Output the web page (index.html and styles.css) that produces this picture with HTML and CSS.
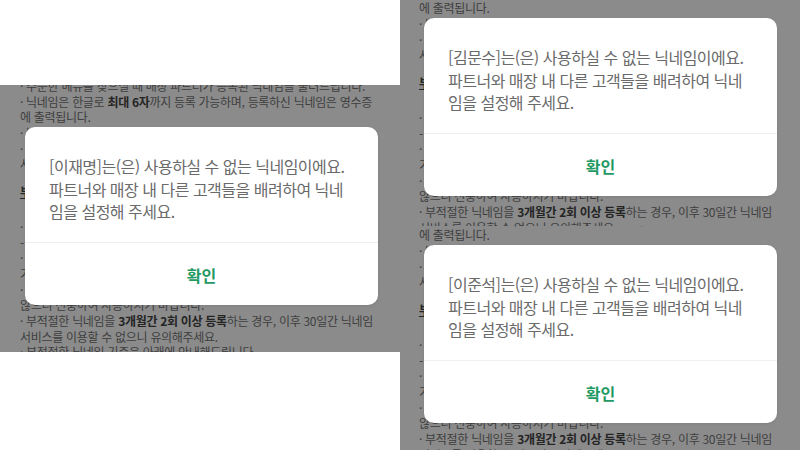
FILE: index.html
```html
<!DOCTYPE html>
<html lang="ko">
<head>
<meta charset="utf-8">
<title>닉네임 안내</title>
<link rel="stylesheet" href="styles.css">
</head>
<body>
<div class="page">
  <div class="col col-left">
    <div class="blank-top"></div>
    <div class="viewport vp-left">
      <div class="screen shift-left">
        <div class="sheet">
          <p class="ln">· 주문한 메뉴를 찾으실 때 매장 파트너가 등록된 닉네임을 불러드립니다.</p>
          <p class="ln">· 닉네임은 한글로 <b>최대 6자</b>까지 등록 가능하며, 등록하신 닉네임은 영수증</p>
          <p class="ln">에 출력됩니다.</p>
          <p class="ln">· 닉네임 사용에 동의하지 않으시면 닉네임이 호출되지 않습니다.</p>
          <p class="ln">· 등록하신 닉네임은 언제든지 변경하실 수 있습니다.</p>
          <p class="ln">사용 가능한 닉네임인지 확인 후 등록해 주세요.</p>
          <p class="ln head"><b><u>부</u>적절한 닉네임 등록 제한</b></p>
          <p class="ln gap">· 욕설, 비속어, 타인을 비방하는 닉네임은 등록이 제한됩니다.</p>
          <p class="ln">- 정치적, 종교적 의미가 담긴 닉네임</p>
          <p class="ln">· 다른 고객에게 불쾌감을 줄 수 있는 닉네임은 제한됩니다.</p>
          <p class="ln">가급적 개인정보가 포함되지 않은 닉네임을 사용해 주세요.</p>
          <p class="ln">· 부적절한 닉네임은 사전 안내 없이 변경될 수 있으며, 복구되지</p>
          <p class="ln">않으니 신중하여 사용하시기 바랍니다.</p>
          <p class="ln">· 부적절한 닉네임을 <b>3개월간 2회 이상 등록</b>하는 경우, 이후 30일간 닉네임</p>
          <p class="ln">서비스를 이용할 수 없으니 유의해주세요.</p>
          <p class="ln">· 부적절한 닉네임 기준은 아래에 안내해드립니다.</p>
        </div>
        <div class="dialog">
          <p class="msg">[이재명]는(은) 사용하실 수 없는 닉네임이에요. 파트너와 매장 내 다른 고객들을 배려하여 닉네임을 설정해 주세요.</p>
          <div class="btn">확인</div>
        </div>
      </div>
    </div>
  </div>
  <div class="col col-right">
    <div class="viewport vp-rt">
      <div class="screen shift-rt">
        <div class="sheet">
          <p class="ln">· 주문한 메뉴를 찾으실 때 매장 파트너가 등록된 닉네임을 불러드립니다.</p>
          <p class="ln">· 닉네임은 한글로 <b>최대 6자</b>까지 등록 가능하며, 등록하신 닉네임은 영수증</p>
          <p class="ln">에 출력됩니다.</p>
          <p class="ln">· 닉네임 사용에 동의하지 않으시면 닉네임이 호출되지 않습니다.</p>
          <p class="ln">· 등록하신 닉네임은 언제든지 변경하실 수 있습니다.</p>
          <p class="ln">사용 가능한 닉네임인지 확인 후 등록해 주세요.</p>
          <p class="ln head"><b><u>부</u>적절한 닉네임 등록 제한</b></p>
          <p class="ln gap">· 욕설, 비속어, 타인을 비방하는 닉네임은 등록이 제한됩니다.</p>
          <p class="ln">- 정치적, 종교적 의미가 담긴 닉네임</p>
          <p class="ln">· 다른 고객에게 불쾌감을 줄 수 있는 닉네임은 제한됩니다.</p>
          <p class="ln">가급적 개인정보가 포함되지 않은 닉네임을 사용해 주세요.</p>
          <p class="ln">· 부적절한 닉네임은 사전 안내 없이 변경될 수 있으며, 복구되지</p>
          <p class="ln">않으니 신중하여 사용하시기 바랍니다.</p>
          <p class="ln">· 부적절한 닉네임을 <b>3개월간 2회 이상 등록</b>하는 경우, 이후 30일간 닉네임</p>
          <p class="ln">서비스를 이용할 수 없으니 유의해주세요.</p>
          <p class="ln">· 부적절한 닉네임 기준은 아래에 안내해드립니다.</p>
        </div>
        <div class="dialog">
          <p class="msg">[김문수]는(은) 사용하실 수 없는 닉네임이에요. 파트너와 매장 내 다른 고객들을 배려하여 닉네임을 설정해 주세요.</p>
          <div class="btn">확인</div>
        </div>
      </div>
    </div>
    <div class="viewport vp-rb">
      <div class="screen shift-rb">
        <div class="sheet">
          <p class="ln">· 주문한 메뉴를 찾으실 때 매장 파트너가 등록된 닉네임을 불러드립니다.</p>
          <p class="ln">· 닉네임은 한글로 <b>최대 6자</b>까지 등록 가능하며, 등록하신 닉네임은 영수증</p>
          <p class="ln">에 출력됩니다.</p>
          <p class="ln">· 닉네임 사용에 동의하지 않으시면 닉네임이 호출되지 않습니다.</p>
          <p class="ln">· 등록하신 닉네임은 언제든지 변경하실 수 있습니다.</p>
          <p class="ln">사용 가능한 닉네임인지 확인 후 등록해 주세요.</p>
          <p class="ln head"><b><u>부</u>적절한 닉네임 등록 제한</b></p>
          <p class="ln gap">· 욕설, 비속어, 타인을 비방하는 닉네임은 등록이 제한됩니다.</p>
          <p class="ln">- 정치적, 종교적 의미가 담긴 닉네임</p>
          <p class="ln">· 다른 고객에게 불쾌감을 줄 수 있는 닉네임은 제한됩니다.</p>
          <p class="ln">가급적 개인정보가 포함되지 않은 닉네임을 사용해 주세요.</p>
          <p class="ln">· 부적절한 닉네임은 사전 안내 없이 변경될 수 있으며, 복구되지</p>
          <p class="ln">않으니 신중하여 사용하시기 바랍니다.</p>
          <p class="ln">· 부적절한 닉네임을 <b>3개월간 2회 이상 등록</b>하는 경우, 이후 30일간 닉네임</p>
          <p class="ln">서비스를 이용할 수 없으니 유의해주세요.</p>
          <p class="ln">· 부적절한 닉네임 기준은 아래에 안내해드립니다.</p>
        </div>
        <div class="dialog">
          <p class="msg">[이준석]는(은) 사용하실 수 없는 닉네임이에요. 파트너와 매장 내 다른 고객들을 배려하여 닉네임을 설정해 주세요.</p>
          <div class="btn">확인</div>
        </div>
      </div>
    </div>
  </div>
</div>
</body>
</html>
```
FILE: styles.css
```css
* { box-sizing: border-box; }
html, body {
  margin: 0;
  padding: 0;
  background: #ffffff;
}
body {
  font-family: "Noto Sans CJK KR", "Noto Sans", sans-serif;
  width: 800px;
  height: 450px;
  overflow: hidden;
}
.page {
  display: flex;
  width: 800px;
  height: 450px;
}
.col {
  width: 400px;
  display: flex;
  flex-direction: column;
}
.blank-top { height: 85px; flex: none; }
.viewport {
  overflow: hidden;
  flex: none;
  background: #8b8b8b;
}
.vp-left { height: 267px; }
.vp-rt { height: 226px; }
.vp-rb { height: 224px; }
.col-right .viewport { width: 400px; }

.screen {
  position: relative;
  width: 400px;
  height: 380px;
  background: #8b8b8b;
}
.shift-left { margin-top: -85px; }
.shift-rt { margin-top: -109px; margin-left: -1px; }
.shift-rb { margin-top: -108px; margin-left: -1px; }

.sheet {
  padding: 78px 0 0 20px;
  color: #3e3e3e;
  font-size: 12px;
  letter-spacing: -0.3px;
}
.ln {
  margin: 0;
  height: 15.7px;
  line-height: 15.7px;
  white-space: nowrap;
}
.ln b { color: #242424; font-weight: 700; }
.head { margin-top: 12px; }
.gap { margin-top: 19px; }

.dialog {
  position: absolute;
  left: 25px;
  top: 127px;
  width: 353px;
  height: 178px;
  background: #ffffff;
  border-radius: 10px;
  display: flex;
  flex-direction: column;
  box-shadow: 0 1px 3px rgba(0,0,0,0.08);
}
.msg {
  margin: 0;
  padding: 28px 24px 0 24px;
  height: 116px;
  font-size: 16px;
  line-height: 22.5px;
  letter-spacing: -0.5px;
  color: #6a6a6a;
  border-bottom: 1px solid #efefef;
}
.btn {
  flex: 1;
  display: flex;
  align-items: center;
  justify-content: center;
  font-size: 16px;
  font-weight: 700;
  color: #1f9a63;
  padding-top: 1px;
}
```
